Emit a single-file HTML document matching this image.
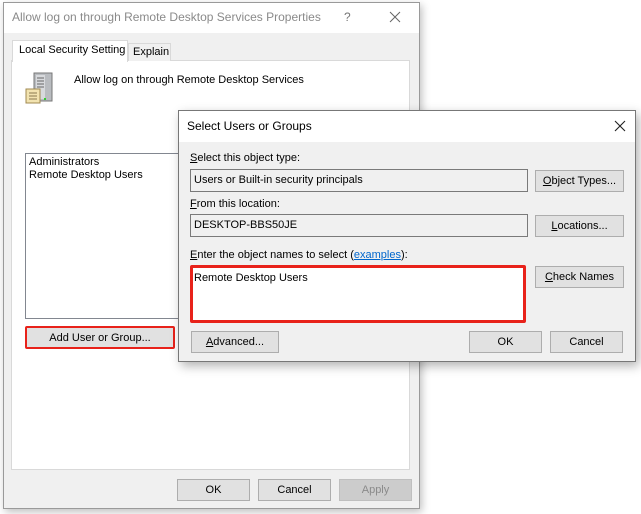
<!DOCTYPE html>
<html><head><style>
body{margin:0;width:641px;height:514px;background:#fff;position:relative;overflow:hidden;font-family:"Liberation Sans",sans-serif;font-size:11px;color:#000}
.a{position:absolute;box-sizing:border-box;white-space:nowrap}
.btn{position:absolute;box-sizing:border-box;background:#e1e1e1;border:1px solid #adadad;text-align:center;font-size:11px;white-space:nowrap}
.inp{position:absolute;box-sizing:border-box;background:#f0f0f0;border:1px solid #7a7a7a;padding:4px 0 0 3px}
u{text-decoration:underline}
</style></head><body>
<div class="a" style="left:3px;top:2px;width:417px;height:507px;background:#f0f0f0;border:1px solid #9a9a9a;box-shadow:2px 3px 8px rgba(0,0,0,.25)"></div>
<div class="a" style="left:4px;top:3px;width:415px;height:30px;background:#fff"></div>
<div class="a" style="left:12px;top:10px;color:#8a8a8a;font-size:12px">Allow log on through Remote Desktop Services Properties</div>
<div class="a" style="left:344px;top:10px;color:#777;font-size:12px">?</div>
<svg class="a" style="left:389px;top:11px" width="12" height="12"><path d="M1 1L11 11M11 1L1 11" stroke="#666" stroke-width="1"/></svg>
<div class="a" style="left:11px;top:60px;width:399px;height:410px;background:#fff;border:1px solid #d9d9d9"></div>
<div class="a" style="left:12px;top:40px;width:116px;height:22px;background:#fff;border:1px solid #d9d9d9;border-bottom:none;padding:3px 0 0 6px">Local Security Setting</div>
<div class="a" style="left:128px;top:43px;width:43px;height:18px;background:#f0f0f0;border:1px solid #d9d9d9;border-bottom:none;padding:2px 0 0 4px">Explain</div>
<svg class="a" style="left:24px;top:72px" width="32" height="34" viewBox="0 0 32 34">
<rect x="10" y="1" width="18" height="28" fill="#b9bcc0" stroke="#777"/>
<rect x="12" y="3" width="9" height="24" fill="#d8dadd"/>
<path d="M13 6h7M13 9h7M13 12h7M13 15h7" stroke="#666"/>
<rect x="2" y="17" width="14" height="14" fill="#f2e3b0" stroke="#a08a50"/>
<path d="M5 21h8M5 24h8M5 27h8" stroke="#8a7a50"/>
<rect x="20" y="26" width="2" height="2" fill="#3c3"/>
</svg>
<div class="a" style="left:74px;top:74px">Allow log on through Remote Desktop Services</div>
<div class="a" style="left:25px;top:153px;width:160px;height:166px;background:#fff;border:1px solid #828790;padding:2px 0 0 3px;line-height:13px">Administrators<br>Remote Desktop Users</div>
<div class="btn" style="left:25px;top:326px;width:150px;height:23px;border:2px solid #e8221a;border-radius:2px;padding-top:4px">Add User or Group...</div>
<div class="btn" style="left:177px;top:479px;width:73px;height:22px;padding-top:4px">OK</div>
<div class="btn" style="left:258px;top:479px;width:73px;height:22px;padding-top:4px">Cancel</div>
<div class="btn" style="left:339px;top:479px;width:73px;height:22px;padding-top:4px;color:#8a8a8a;background:#cccccc;border-color:#bfbfbf">Apply</div>
<div class="a" style="left:178px;top:110px;width:458px;height:252px;background:#f0f0f0;border:1px solid #777;box-shadow:3px 4px 10px rgba(0,0,0,.3)"></div>
<div class="a" style="left:179px;top:111px;width:456px;height:31px;background:#fff"></div>
<div class="a" style="left:187px;top:119px;font-size:12px">Select Users or Groups</div>
<svg class="a" style="left:614px;top:120px" width="12" height="12"><path d="M1 1L11 11M11 1L1 11" stroke="#222" stroke-width="1.1"/></svg>
<div class="a" style="left:190px;top:152px"><u>S</u>elect this object type:</div>
<div class="inp" style="left:190px;top:169px;width:338px;height:23px">Users or Built-in security principals</div>
<div class="btn" style="left:535px;top:170px;width:89px;height:22px;padding-top:4px"><u>O</u>bject Types...</div>
<div class="a" style="left:190px;top:198px"><u>F</u>rom this location:</div>
<div class="inp" style="left:190px;top:214px;width:338px;height:23px">DESKTOP-BBS50JE</div>
<div class="btn" style="left:535px;top:215px;width:89px;height:22px;padding-top:4px"><u>L</u>ocations...</div>
<div class="a" style="left:190px;top:249px"><u>E</u>nter the object names to select (<span style="color:#0066cc;text-decoration:underline">examples</span>):</div>
<div class="a" style="left:190px;top:265px;width:336px;height:58px;background:#fff;border:3px solid #e8221a;border-radius:2px;padding:4px 0 0 1px">Remote Desktop Users</div>
<div class="btn" style="left:535px;top:266px;width:89px;height:22px;padding-top:4px"><u>C</u>heck Names</div>
<div class="btn" style="left:191px;top:331px;width:88px;height:22px;padding-top:4px"><u>A</u>dvanced...</div>
<div class="btn" style="left:469px;top:331px;width:73px;height:22px;padding-top:4px">OK</div>
<div class="btn" style="left:550px;top:331px;width:73px;height:22px;padding-top:4px">Cancel</div>
</body></html>
